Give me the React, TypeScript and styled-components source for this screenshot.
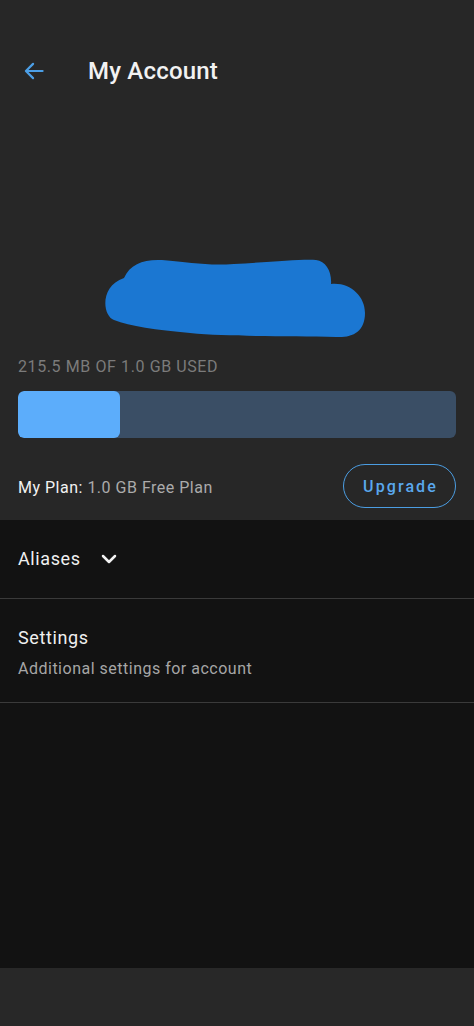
import React from "react";
import styled, { createGlobalStyle } from "styled-components";

const Global = createGlobalStyle`
  html, body { margin: 0; padding: 0; background: #121212; }
  body { font-family: Roboto, "Noto Sans", "Liberation Sans", sans-serif; -webkit-font-smoothing: antialiased; }
  * { box-sizing: border-box; }
`;

const Page = styled.div`
  width: 474px;
  min-height: 1026px;
  display: flex;
  flex-direction: column;
  background: #121212;
`;

const TopPanel = styled.section`
  background: #272727;
  padding: 0 18px 12px;
  display: flex;
  flex-direction: column;
`;

const Header = styled.header`
  height: 142px;
  display: flex;
  align-items: center;
  gap: 44px;
  padding-left: 6px;
`;

const BackButton = styled.button`
  background: none;
  border: none;
  padding: 0;
  width: 20px;
  height: 20px;
  display: flex;
  align-items: center;
  justify-content: center;
  cursor: pointer;
`;

const Title = styled.h1`
  margin: 0;
  font-size: 24px;
  font-weight: 500;
  color: #f2f2f2;
  letter-spacing: 0.2px;
`;

const AvatarArea = styled.div`
  margin-top: 116px;
  height: 80px;
  display: flex;
  padding-left: 84px;
`;

const UsageLabel = styled.div`
  margin-top: 19px;
  font-size: 16px;
  line-height: 20px;
  color: #7b7b7b;
  letter-spacing: 0.6px;
  text-transform: uppercase;
`;

const Track = styled.div`
  margin-top: 14px;
  height: 47px;
  border-radius: 6px;
  background: #3a4e65;
  overflow: hidden;
  display: flex;
`;

const Fill = styled.div`
  height: 100%;
  background: #5cadfb;
  border-radius: 6px;
`;

const PlanRow = styled.div`
  margin-top: 26px;
  height: 44px;
  display: flex;
  align-items: center;
  justify-content: space-between;
`;

const PlanText = styled.div`
  font-size: 16px;
  letter-spacing: 0.5px;
  color: #ababab;
  padding-top: 2px;
`;

const PlanKey = styled.span`
  color: #f2f2f2;
`;

const UpgradeButton = styled.button`
  height: 44px;
  width: 113px;
  border-radius: 22px;
  border: 1.5px solid #4b9de2;
  background: transparent;
  color: #5aa8ee;
  font-family: Roboto, "Noto Sans", sans-serif;
  font-size: 16px;
  font-weight: 500;
  letter-spacing: 2.1px;
  padding: 0 0 0 2px;
  cursor: pointer;
`;

const ListSection = styled.section`
  flex: 1;
  background: #121212;
  display: flex;
  flex-direction: column;
`;

const ListItem = styled.div<{ $tall?: boolean }>`
  border-bottom: 1px solid #3a3a3a;
  padding: ${(p) => (p.$tall ? "28px 18px 24px" : "0 18px")};
  height: ${(p) => (p.$tall ? "104px" : "79px")};
  display: flex;
  flex-direction: ${(p) => (p.$tall ? "column" : "row")};
  align-items: ${(p) => (p.$tall ? "flex-start" : "center")};
  gap: ${(p) => (p.$tall ? "10px" : "20px")};
`;

const ItemTitle = styled.div`
  font-size: 18px;
  line-height: 22px;
  letter-spacing: 0.6px;
  color: #f0f0f0;
`;

const ItemSub = styled.div`
  font-size: 16px;
  line-height: 20px;
  letter-spacing: 0.5px;
  color: #a6a6a6;
`;

const BottomBar = styled.footer`
  height: 58px;
  background: #282828;
`;

const BackArrow = () => (
  <svg width="21" height="18" viewBox="0 0 21 18" fill="none">
    <path
      d="M19.5 9H2.5M9.5 1.5L2 9l7.5 7.5"
      stroke="#4c9fe6"
      strokeWidth="2.3"
      strokeLinecap="round"
      strokeLinejoin="round"
    />
  </svg>
);

const Chevron = () => (
  <svg width="16" height="12" viewBox="0 0 16 12" fill="none">
    <path
      d="M2 3l6 6 6-6"
      stroke="#f2f2f2"
      strokeWidth="2.5"
      strokeLinecap="round"
      strokeLinejoin="round"
    />
  </svg>
);

const Blob = () => (
  <svg width="266" height="82" viewBox="0 0 266 82">
    <path
      d="M22 20 C 28 6, 42 1, 60 2 C 88 4, 104 8, 132 6 C 168 4, 200 1, 214 2 C 224 3, 230 14, 229 26 C 248 24, 263 38, 263 55 C 263 74, 250 80, 234 79 C 190 78, 130 79, 88 75 C 54 72, 28 68, 12 62 C 0 57, -2 28, 22 20 Z"
      fill="#1b77d2"
    />
  </svg>
);

export default function App() {
  const used = 215.5;
  const total = 1024;
  const pct = Math.max((used / total) * 100, 23.3);
  return (
    <>
      <Global />
      <Page>
        <TopPanel>
          <Header>
            <BackButton aria-label="Back">
              <BackArrow />
            </BackButton>
            <Title>My Account</Title>
          </Header>
          <AvatarArea>
            <Blob />
          </AvatarArea>
          <UsageLabel>215.5 MB of 1.0 GB used</UsageLabel>
          <Track>
            <Fill style={{ width: `${pct}%` }} />
          </Track>
          <PlanRow>
            <PlanText>
              <PlanKey>My Plan:</PlanKey> 1.0 GB Free Plan
            </PlanText>
            <UpgradeButton>Upgrade</UpgradeButton>
          </PlanRow>
        </TopPanel>
        <ListSection>
          <ListItem>
            <ItemTitle>Aliases</ItemTitle>
            <Chevron />
          </ListItem>
          <ListItem $tall>
            <ItemTitle>Settings</ItemTitle>
            <ItemSub>Additional settings for account</ItemSub>
          </ListItem>
        </ListSection>
        <BottomBar />
      </Page>
    </>
  );
}
